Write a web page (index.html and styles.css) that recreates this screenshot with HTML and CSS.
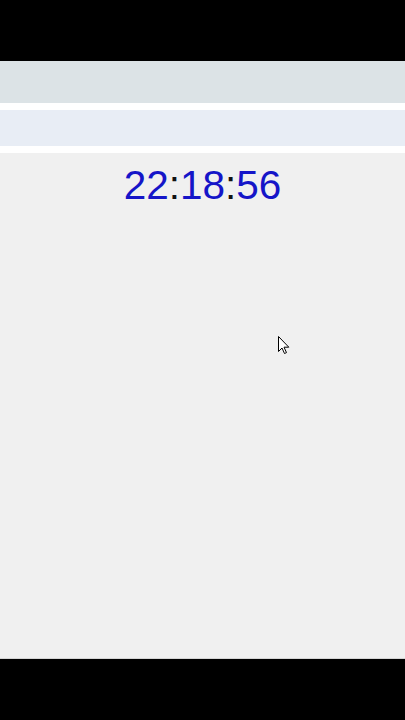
FILE: index.html
```html
<!DOCTYPE html>
<html>
<head>
<meta charset="utf-8">
<link rel="stylesheet" href="styles.css">
</head>
<body>
<div class="screen">
  <div class="topbar"></div>
  <div class="header"></div>
  <div class="sep"></div>
  <div class="subheader"></div>
  <div class="sep"></div>
  <main class="content">
    <div class="clock"><span class="num">22</span><span class="colon">:</span><span class="num">18</span><span class="colon">:</span><span class="num">56</span></div>
    <svg class="cursor" width="12" height="19" viewBox="0 0 12 19"><path d="M0.5 0.5 L0.5 15.5 L4 12 L6.5 17.5 L8.5 16.6 L6 11.2 L10.8 11.2 Z" fill="#fff" stroke="#000" stroke-width="1" stroke-linejoin="round"/></svg>
  </main>
  <div class="bottombar"></div>
</div>
</body>
</html>
```
FILE: styles.css
```css
html, body {
  margin: 0;
  padding: 0;
  background: #000;
}
.screen {
  width: 405px;
  height: 720px;
  display: flex;
  flex-direction: column;
  background: #000;
}
.topbar {
  height: 61px;
  background: #000;
}
.header {
  height: 42px;
  background: #dce3e6;
}
.sep {
  height: 7px;
  background: #fff;
}
.subheader {
  height: 36px;
  background: #e8edf5;
}
.content {
  position: relative;
  height: 505px;
  background: #f0f0f0;
  border-bottom: 1px solid #d4d4d4;
}
.clock {
  font-family: "Liberation Sans", Arial, sans-serif;
  font-size: 40.5px;
  line-height: 1;
  text-align: center;
  padding-top: 12px;
}
.num {
  color: #1515c8;
}
.colon {
  color: #111;
}
.cursor {
  position: absolute;
  left: 278px;
  top: 183px;
}
.bottombar {
  flex: 1;
  background: #000;
}
```
